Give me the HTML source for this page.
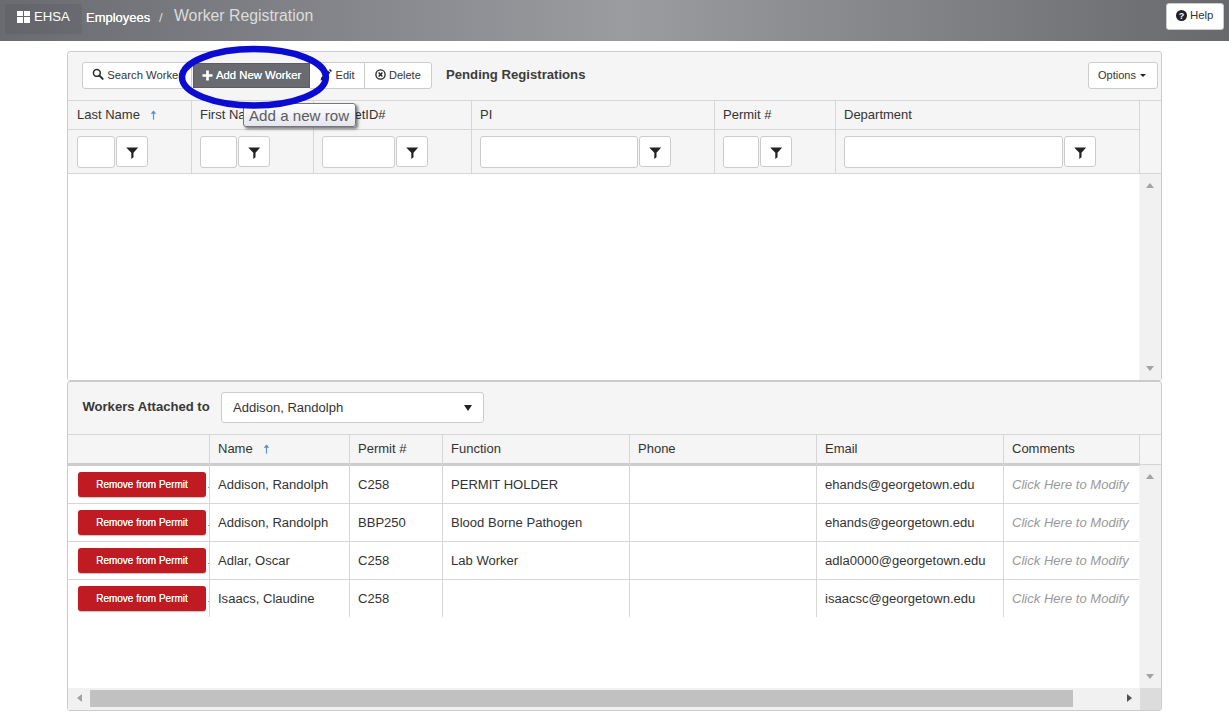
<!DOCTYPE html>
<html>
<head>
<meta charset="utf-8">
<title>Worker Registration</title>
<style>
*{box-sizing:border-box;margin:0;padding:0}
html,body{width:1229px;height:725px;overflow:hidden;background:#fff;font-family:"Liberation Sans",sans-serif;color:#333;font-size:13px}
.abs{position:absolute}
#nav{position:absolute;left:0;top:0;width:1229px;height:41px;background:linear-gradient(90deg,#6a6b70 0%,#9b9ca0 51%,#68696d 100%)}
#brand{position:absolute;left:5px;top:4px;width:77px;height:30px;background:rgba(70,71,76,.16);border-radius:2px}
.navtxt{position:absolute;color:#fff;white-space:nowrap}
#help{position:absolute;left:1166px;top:3px;width:58px;height:27px;background:#fff;border:1px solid #ccc;border-radius:3px;font-size:12px;color:#333}
.panel{position:absolute;left:67px;width:1095px;background:#f5f5f5;border:1px solid #cbcbcb;border-radius:3px}
.btn{position:absolute;height:27px;background:#fff;border:1px solid #ccc;font-size:11px;color:#333;white-space:nowrap}
.t{position:absolute;white-space:nowrap}
.hl{position:absolute;background:#d6d6d6}
.inp{position:absolute;background:#fff;border:1px solid #ccc;border-radius:3px;height:32px}
.fbtn{position:absolute;background:#fff;border:1px solid #ccc;border-radius:3px;height:31px;width:32px}
.fbtn svg{position:absolute;left:9px;top:10px}
.rbtn{position:absolute;left:78px;width:128px;height:25px;background:#c01a22;border-radius:3px;color:#fff;font-size:10px;text-align:center;line-height:25px;box-shadow:0 1px 1px rgba(0,0,0,.25);text-shadow:0 0 .5px #fff}
.cell{position:absolute;font-size:13.05px;color:#333;white-space:nowrap}
.cm{position:absolute;font-size:13.05px;color:#999;font-style:italic;white-space:nowrap}
</style>
</head>
<body>
<!-- NAVBAR -->
<div id="nav">
  <div id="brand"></div>
  <svg class="abs" style="left:17px;top:11px" width="13" height="12" viewBox="0 0 13 12"><rect x="0" y="0" width="6" height="5" fill="#fff"/><rect x="7" y="0" width="6" height="5" fill="#fff"/><rect x="0" y="6" width="6" height="6" fill="#fff"/><rect x="7" y="6" width="6" height="6" fill="#fff"/></svg>
  <div class="navtxt" style="left:34px;top:9px;font-size:13.2px">EHSA</div>
  <div class="navtxt" style="left:86px;top:10px;font-size:13px;text-shadow:0 0 .5px #fff">Employees</div>
  <div class="navtxt" style="left:159px;top:10px;font-size:13px;color:#ddd">/</div>
  <div class="navtxt" style="left:174px;top:7px;font-size:15.8px;color:#dcdcdc">Worker Registration</div>
  <div id="help">
    <svg class="abs" style="left:9px;top:6px" width="11" height="11" viewBox="0 0 11 11"><circle cx="5.5" cy="5.5" r="5.5" fill="#222"/><text x="5.5" y="9" font-size="9" font-weight="bold" fill="#fff" text-anchor="middle" font-family="Liberation Sans">?</text></svg>
    <div class="t" style="left:23px;top:5px;font-size:11.4px">Help</div>
  </div>
</div>

<!-- PANEL 1 -->
<div class="panel" style="top:51px;height:330px"></div>
<div class="abs" style="left:68px;top:174px;width:1071px;height:206px;background:#fff"></div>
<div class="abs" style="left:1140px;top:174px;width:21px;height:206px;background:#f1f1f1"></div>
<div class="hl" style="left:68px;top:100px;width:1093px;height:1px"></div>
<div class="hl" style="left:68px;top:129px;width:1071px;height:1px"></div>
<div class="hl" style="left:68px;top:173px;width:1093px;height:1px"></div>
<!-- column lines -->
<div class="hl" style="left:191px;top:100px;width:1px;height:74px"></div>
<div class="hl" style="left:313px;top:100px;width:1px;height:74px"></div>
<div class="hl" style="left:471px;top:100px;width:1px;height:74px"></div>
<div class="hl" style="left:714px;top:100px;width:1px;height:74px"></div>
<div class="hl" style="left:835px;top:100px;width:1px;height:74px"></div>
<div class="hl" style="left:1139px;top:100px;width:1px;height:74px"></div>

<!-- toolbar 1 -->
<div class="btn" style="left:82px;top:62px;width:110px;border-radius:3px"></div>
<svg class="abs" style="left:92px;top:68px" width="13" height="13" viewBox="0 0 13 13"><circle cx="4.85" cy="4.95" r="3.4" fill="none" stroke="#2a2a2a" stroke-width="1.5"/><path d="M7.4 7.5 L10.7 10.9" stroke="#2a2a2a" stroke-width="1.9" stroke-linecap="round"/></svg>
<div class="t" style="left:107.3px;top:69px;font-size:11.25px;width:76px;overflow:hidden">Search Worker</div>
<div class="btn" style="left:193px;top:63px;width:117px;height:25px;background:#6a6b70;border-color:#5d5e63;border-radius:0"></div>
<svg class="abs" style="left:202px;top:70px" width="11" height="11" viewBox="0 0 11 11"><path d="M5.5 0.5V10.5M0.5 5.5H10.5" stroke="#fff" stroke-width="2.7"/></svg>
<div class="t" style="left:216px;top:69px;font-size:11.3px;color:#fff;text-shadow:0 0 .4px #fff">Add New Worker</div>
<div class="btn" style="left:310px;top:62px;width:55px;border-radius:0;border-left:none"></div>
<svg class="abs" style="left:320px;top:69px" width="12" height="12" viewBox="0 0 12 12"><path d="M0.6 11.4L1.3 8.6L8.2 1.7L10.3 3.8L3.4 10.7Z" fill="#222"/><path d="M8.9 1L9.7 0.3Q10.2 0 10.6 0.4L11.6 1.4Q12 1.8 11.6 2.3L10.9 3.1Z" fill="#222"/></svg>
<div class="t" style="left:335.6px;top:69px;font-size:11px">Edit</div>
<div class="btn" style="left:364px;top:62px;width:68px;border-radius:0 3px 3px 0"></div>
<svg class="abs" style="left:374.5px;top:69px" width="11" height="11" viewBox="0 0 11 11"><circle cx="5.5" cy="5.5" r="4.6" fill="none" stroke="#222" stroke-width="1.3"/><path d="M3.6 3.6L7.4 7.4M7.4 3.6L3.6 7.4" stroke="#222" stroke-width="1.4"/></svg>
<div class="t" style="left:389px;top:69px;font-size:11px">Delete</div>
<div class="t" style="left:446px;top:67px;font-size:13.15px;font-weight:bold;color:#3c3c3c">Pending Registrations</div>
<div class="btn" style="left:1088px;top:62px;width:70px;border-radius:3px"></div>
<div class="t" style="left:1098px;top:69px;font-size:11px">Options</div>
<div class="abs" style="left:1140px;top:74px;width:0;height:0;border-left:3.5px solid transparent;border-right:3.5px solid transparent;border-top:3.5px solid #222"></div>

<!-- header labels 1 -->
<div class="t" style="left:77px;top:107px">Last Name</div>
<svg class="abs" style="left:150px;top:109.5px" width="7" height="10" viewBox="0 0 7 10"><path d="M3.5 1V9.6" fill="none" stroke="#5a8fc8" stroke-width="1.2"/><path d="M0.7 3.7L3.5 0.4L6.3 3.7Z" fill="#5a8fc8"/></svg>
<div class="t" style="left:200px;top:107px">First Name</div>
<div class="t" style="left:322px;top:107px">GU NetID#</div>
<div class="t" style="left:480px;top:107px">PI</div>
<div class="t" style="left:723px;top:107px">Permit #</div>
<div class="t" style="left:844px;top:107px">Department</div>

<!-- filter row -->
<div class="inp" style="left:77px;top:136px;width:38px"></div>
<div class="fbtn" style="left:116px;top:136px"><svg width="13" height="12" viewBox="0 0 13 12"><path d="M0.2 0.4H12.2L7.5 5.7V10.2L5.3 11.9V5.7Z" fill="#222"/></svg></div>
<div class="inp" style="left:200px;top:136px;width:37px"></div>
<div class="fbtn" style="left:238px;top:136px"><svg width="13" height="12" viewBox="0 0 13 12"><path d="M0.2 0.4H12.2L7.5 5.7V10.2L5.3 11.9V5.7Z" fill="#222"/></svg></div>
<div class="inp" style="left:322px;top:136px;width:73px"></div>
<div class="fbtn" style="left:396px;top:136px"><svg width="13" height="12" viewBox="0 0 13 12"><path d="M0.2 0.4H12.2L7.5 5.7V10.2L5.3 11.9V5.7Z" fill="#222"/></svg></div>
<div class="inp" style="left:480px;top:136px;width:158px"></div>
<div class="fbtn" style="left:639px;top:136px"><svg width="13" height="12" viewBox="0 0 13 12"><path d="M0.2 0.4H12.2L7.5 5.7V10.2L5.3 11.9V5.7Z" fill="#222"/></svg></div>
<div class="inp" style="left:723px;top:136px;width:36px"></div>
<div class="fbtn" style="left:760px;top:136px"><svg width="13" height="12" viewBox="0 0 13 12"><path d="M0.2 0.4H12.2L7.5 5.7V10.2L5.3 11.9V5.7Z" fill="#222"/></svg></div>
<div class="inp" style="left:844px;top:136px;width:219px"></div>
<div class="fbtn" style="left:1064px;top:136px"><svg width="13" height="12" viewBox="0 0 13 12"><path d="M0.2 0.4H12.2L7.5 5.7V10.2L5.3 11.9V5.7Z" fill="#222"/></svg></div>

<!-- v scrollbar arrows 1 -->
<div class="abs" style="left:1146px;top:183px;width:0;height:0;border-left:4.5px solid transparent;border-right:4.5px solid transparent;border-bottom:5px solid #a3a3a3"></div>
<div class="abs" style="left:1146px;top:366px;width:0;height:0;border-left:4.5px solid transparent;border-right:4.5px solid transparent;border-top:5px solid #a3a3a3"></div>

<!-- ellipse + tooltip -->
<div class="abs" style="left:243px;top:103px;width:113px;height:24px;background:linear-gradient(#fff,#e4e5f0);border:1px solid #767676;border-radius:3px;box-shadow:2px 2px 3px rgba(0,0,0,.5)"></div>
<div class="t" style="left:249px;top:107px;font-size:15.15px;color:#5c5c5c">Add a new row</div>
<svg class="abs" style="left:170px;top:40px" width="170" height="76" viewBox="0 0 170 76"><ellipse cx="83.95" cy="37.3" rx="71.9" ry="28.2" fill="none" stroke="#0b0bd2" stroke-width="6.5"/></svg>

<!-- PANEL 2 -->
<div class="panel" style="top:381px;height:330px"></div>
<div class="abs" style="left:68px;top:465px;width:1071px;height:224px;background:#fff"></div>
<div class="abs" style="left:1140px;top:465px;width:21px;height:223px;background:#f1f1f1"></div>
<div class="t" style="left:82.4px;top:399px;font-size:13.1px;font-weight:bold;color:#383838">Workers Attached to</div>
<div class="inp" style="left:221px;top:392px;width:263px;height:31px"></div>
<div class="t" style="left:233px;top:400px;font-size:13.05px">Addison, Randolph</div>
<div class="abs" style="left:464px;top:405px;width:0;height:0;border-left:4px solid transparent;border-right:4px solid transparent;border-top:6px solid #222"></div>
<div class="hl" style="left:68px;top:434px;width:1093px;height:1px"></div>
<div class="hl" style="left:68px;top:463px;width:1072px;height:3px;background:#cdcdcd"></div>
<div class="hl" style="left:1140px;top:464px;width:21px;height:1px"></div>
<!-- header labels 2 -->
<div class="t" style="left:218px;top:441px">Name</div>
<svg class="abs" style="left:263px;top:443.5px" width="7" height="10" viewBox="0 0 7 10"><path d="M3.5 1V9.6" fill="none" stroke="#5a8fc8" stroke-width="1.2"/><path d="M0.7 3.7L3.5 0.4L6.3 3.7Z" fill="#5a8fc8"/></svg>
<div class="t" style="left:358px;top:441px">Permit #</div>
<div class="t" style="left:451px;top:441px">Function</div>
<div class="t" style="left:638px;top:441px">Phone</div>
<div class="t" style="left:825px;top:441px">Email</div>
<div class="t" style="left:1012px;top:441px">Comments</div>
<!-- col lines 2 -->
<div class="hl" style="left:209px;top:434px;width:1px;height:183px"></div>
<div class="hl" style="left:349px;top:434px;width:1px;height:183px"></div>
<div class="hl" style="left:442px;top:434px;width:1px;height:183px"></div>
<div class="hl" style="left:629px;top:434px;width:1px;height:183px"></div>
<div class="hl" style="left:816px;top:434px;width:1px;height:183px"></div>
<div class="hl" style="left:1003px;top:434px;width:1px;height:183px"></div>
<div class="hl" style="left:1139px;top:434px;width:1px;height:31px"></div>
<!-- row lines -->
<div class="hl" style="left:68px;top:503px;width:1071px;height:1px"></div>
<div class="hl" style="left:68px;top:541px;width:1071px;height:1px"></div>
<div class="hl" style="left:68px;top:579px;width:1071px;height:1px"></div>

<!-- rows -->
<div class="rbtn" style="top:472px">Remove from Permit</div>
<div class="cell" style="left:218px;top:477px">Addison, Randolph</div>
<div class="cell" style="left:358px;top:477px">C258</div>
<div class="cell" style="left:451px;top:477px">PERMIT HOLDER</div>
<div class="cell" style="left:825px;top:477px">ehands@georgetown.edu</div>
<div class="cm" style="left:1012px;top:477px">Click Here to Modify</div>

<div class="rbtn" style="top:510px">Remove from Permit</div>
<div class="cell" style="left:218px;top:515px">Addison, Randolph</div>
<div class="cell" style="left:358px;top:515px">BBP250</div>
<div class="cell" style="left:451px;top:515px">Blood Borne Pathogen</div>
<div class="cell" style="left:825px;top:515px">ehands@georgetown.edu</div>
<div class="cm" style="left:1012px;top:515px">Click Here to Modify</div>

<div class="rbtn" style="top:548px">Remove from Permit</div>
<div class="cell" style="left:218px;top:553px">Adlar, Oscar</div>
<div class="cell" style="left:358px;top:553px">C258</div>
<div class="cell" style="left:451px;top:553px">Lab Worker</div>
<div class="cell" style="left:825px;top:553px">adla0000@georgetown.edu</div>
<div class="cm" style="left:1012px;top:553px">Click Here to Modify</div>

<div class="rbtn" style="top:586px">Remove from Permit</div>
<div class="cell" style="left:218px;top:591px">Isaacs, Claudine</div>
<div class="cell" style="left:358px;top:591px">C258</div>
<div class="cell" style="left:825px;top:591px">isaacsc@georgetown.edu</div>
<div class="cm" style="left:1012px;top:591px">Click Here to Modify</div>

<div class="abs" style="left:208px;top:487px;width:1px;height:1px;background:#999"></div>
<div class="abs" style="left:208px;top:525px;width:1px;height:1px;background:#999"></div>
<div class="abs" style="left:208px;top:563px;width:1px;height:1px;background:#999"></div>
<div class="abs" style="left:208px;top:601px;width:1px;height:1px;background:#999"></div>
<!-- v scrollbar arrows 2 -->
<div class="abs" style="left:1146px;top:474px;width:0;height:0;border-left:4.5px solid transparent;border-right:4.5px solid transparent;border-bottom:5px solid #a3a3a3"></div>
<div class="abs" style="left:1146px;top:674px;width:0;height:0;border-left:4.5px solid transparent;border-right:4.5px solid transparent;border-top:5px solid #a3a3a3"></div>
<!-- h scrollbar -->
<div class="abs" style="left:68px;top:688px;width:1072px;height:22px;background:#f1f1f1"></div>
<div class="abs" style="left:1140px;top:688px;width:21px;height:22px;background:#dcdcdc"></div>
<div class="abs" style="left:90px;top:690px;width:983px;height:17px;background:#c1c1c1"></div>
<div class="abs" style="left:77px;top:694px;width:0;height:0;border-top:4.5px solid transparent;border-bottom:4.5px solid transparent;border-right:5px solid #a3a3a3"></div>
<div class="abs" style="left:1127px;top:694px;width:0;height:0;border-top:4.5px solid transparent;border-bottom:4.5px solid transparent;border-left:5px solid #505050"></div>
</body>
</html>
